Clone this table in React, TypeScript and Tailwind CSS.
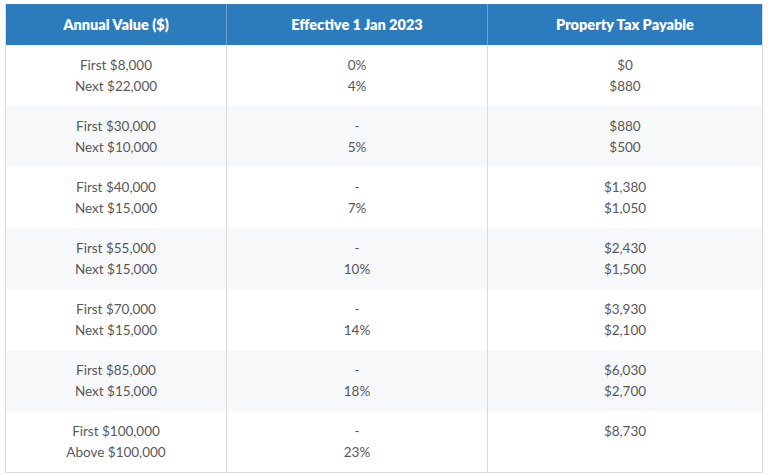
const rows: [string, string][][] = [
  [["First $8,000", "Next $22,000"], ["0%", "4%"], ["$0", "$880"]],
  [["First $30,000", "Next $10,000"], ["-", "5%"], ["$880", "$500"]],
  [["First $40,000", "Next $15,000"], ["-", "7%"], ["$1,380", "$1,050"]],
  [["First $55,000", "Next $15,000"], ["-", "10%"], ["$2,430", "$1,500"]],
  [["First $70,000", "Next $15,000"], ["-", "14%"], ["$3,930", "$2,100"]],
  [["First $85,000", "Next $15,000"], ["-", "18%"], ["$6,030", "$2,700"]],
  [["First $100,000", "Above $100,000"], ["-", "23%"], ["$8,730", ""]],
] as [string, string][][];

const headers = ["Annual Value ($)", "Effective 1 Jan 2023", "Property Tax Payable"];

export default function App() {
  return (
    <div className="h-[475px] w-[768px] bg-white pl-[5px] pt-[4px] font-['Lato',sans-serif]">
      <div className="w-[758px] border-b border-l border-r border-[#dadada]">
        <div className="grid h-[41px] grid-cols-[220px_261px_1fr] bg-[#2c7bbd] text-[14.5px] font-extrabold text-white">
          {headers.map((h, i) => (
            <div
              key={h}
              className={`flex items-center justify-center ${i > 0 ? "border-l border-[#6fa4d2]" : ""}`}
            >
              {h}
            </div>
          ))}
        </div>
        {rows.map((row, r) => (
          <div
            key={r}
            className={`grid h-[61px] grid-cols-[220px_261px_1fr] text-[13.5px] leading-[21px] text-[#585858] ${
              r % 2 === 1 ? "bg-[#f6f8fa]" : "bg-white"
            }`}
          >
            {row.map((cell, c) => (
              <div
                key={c}
                className={`flex flex-col justify-center text-center ${c > 0 ? "border-l border-[#dadada]" : ""}`}
              >
                <span className="h-[21px]">{cell[0]}</span>
                <span className="h-[21px]">{cell[1]}</span>
              </div>
            ))}
          </div>
        ))}
      </div>
    </div>
  );
}
